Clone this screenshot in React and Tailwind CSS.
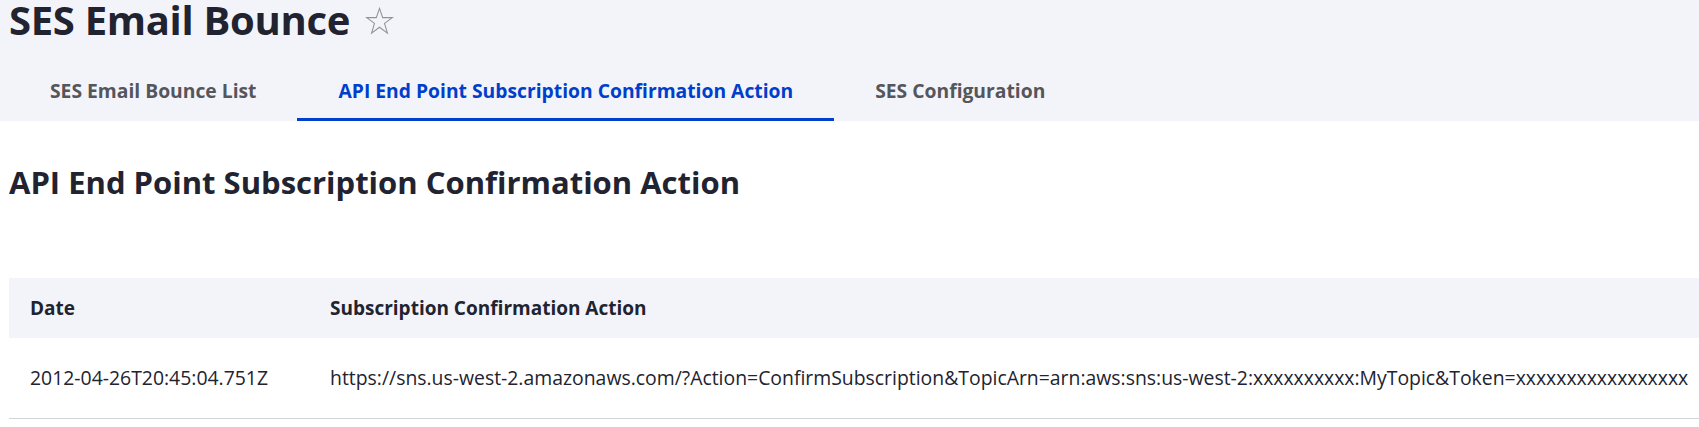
import React from 'react';

const tabs = [
  { label: 'SES Email Bounce List', active: false },
  { label: 'API End Point Subscription Confirmation Action', active: true },
  { label: 'SES Configuration', active: false },
];

const rows = [
  {
    date: '2012-04-26T20:45:04.751Z',
    action:
      'https://sns.us-west-2.amazonaws.com/?Action=ConfirmSubscription&TopicArn=arn:aws:sns:us-west-2:xxxxxxxxxx:MyTopic&Token=xxxxxxxxxxxxxxxxx',
  },
];

const Star = () => (
  <svg width="29" height="28" viewBox="0 0 30 29" className="ml-[15px] mt-[7px]">
    <polygon
      points="15,1.5 18.3,11 28.3,11 20.2,17 23.2,27 15,21 6.8,27 9.8,17 1.7,11 11.7,11"
      fill="none"
      stroke="#8e929c"
      strokeWidth="1.1"
    />
  </svg>
);

export default function App() {
  return (
    <div className="min-h-screen bg-white font-['Open_Sans',sans-serif] text-[#222330] overflow-hidden">
      <div className="bg-[#f3f4f9] pl-[9px]">
        <div className="flex h-[40px] items-start">
          <h1 className="text-[40px] font-bold leading-[40px] tracking-[-0.3px]">SES Email Bounce</h1>
          <Star />
        </div>
        <nav className="mt-[25px] flex">
          {tabs.map((t) => (
            <a
              key={t.label}
              className={[
                'flex h-[56px] items-center border-b-[3px] px-[41px] text-[19.3px] font-bold',
                t.active ? 'border-[#003ecc] text-[#003ecc]' : 'border-transparent text-[#55565b]',
              ].join(' ')}
            >
              {t.label}
            </a>
          ))}
        </nav>
      </div>
      <div className="pl-[9px]">
        <h2 className="mt-[41px] text-[31px] font-bold leading-[40px]">
          API End Point Subscription Confirmation Action
        </h2>
        <table className="mt-[76px] w-full border-collapse text-left text-[19.4px]">
          <thead>
            <tr className="h-[60px] bg-[#f3f4f9]">
              <th className="w-[321px] pl-[21px] text-[19px] font-bold">Date</th>
              <th className="text-[19px] font-bold">Subscription Confirmation Action</th>
            </tr>
          </thead>
          <tbody>
            {rows.map((r) => (
              <tr key={r.date} className="h-[80px] border-b border-[#d3d4d9]">
                <td className="pl-[21px] whitespace-nowrap">{r.date}</td>
                <td className="whitespace-nowrap">{r.action}</td>
              </tr>
            ))}
          </tbody>
        </table>
      </div>
    </div>
  );
}
